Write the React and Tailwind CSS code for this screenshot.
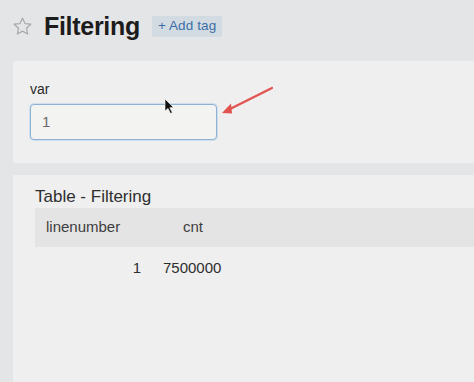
import React from "react";

const StarIcon = () => (
  <svg width="21" height="21" viewBox="0 0 24 24" fill="none" stroke="#a9a9ab" strokeWidth="1.4" strokeLinejoin="round">
    <path d="M12 2.5l2.9 6.1 6.6.8-4.9 4.6 1.3 6.6L12 17.3l-5.9 3.3 1.3-6.6-4.9-4.6 6.6-.8z" />
  </svg>
);

// red annotation arrow drawn over the screenshot
const Annotation = () => (
  <svg className="absolute left-0 top-0 pointer-events-none" width="474" height="382">
    <line x1="272" y1="88" x2="228" y2="110" stroke="#e2524f" strokeWidth="2.2" strokeLinecap="round" />
    <path d="M222 113 L231 103.5 L232 113.5 Z" fill="#e2524f" />
    <path d="M165 99 L165 111 L168 108.5 L170.5 113.5 L172.3 112.6 L169.8 107.8 L173.5 107.5 Z" fill="#111" stroke="#fff" strokeWidth="0.6" />
  </svg>
);

export default function App() {
  return (
    <div
      className="relative w-[474px] h-[382px] overflow-hidden bg-[#e4e5e6]"
      style={{ fontFamily: '"Liberation Sans", Arial, sans-serif' }}
    >
      {/* header */}
      <div className="flex items-center h-[61px] pl-[12px] pb-[8px]">
        <StarIcon />
        <h1 className="ml-[11px] text-[25px] font-bold text-[#1c1c1c] tracking-[-0.3px]">Filtering</h1>
        <span className="ml-[12px] h-[21px] px-[6px] flex items-center rounded-[2px] bg-[#d3dbe2] text-[13.5px] text-[#3b6ea6] tracking-[0.1px]">
          + Add tag
        </span>
      </div>

      {/* variable card */}
      <div className="ml-[13px] h-[102px] bg-[#efefef] pl-[17px] pt-[19px] rounded-tl-[2px]">
        <div className="text-[14px] text-[#2a2a2a] leading-[18px]">var</div>
        <div className="mt-[6px] w-[187px] h-[36px] rounded-[4px] border-[1.5px] border-[#8db2d4] bg-[#f3f3f2] shadow-[0_0_0_1px_#cfdeec] flex items-center pl-[11px] text-[15px] text-[#6a6a6a]">
          1
        </div>
      </div>

      {/* table card */}
      <div className="ml-[13px] mt-[12px] w-[461px] h-[220px] bg-[#efefef] pl-[22px] pt-[11px]">
        <div className="text-[17px] text-[#2e2e2e] leading-[21px]">Table - Filtering</div>
        <div className="mt-[1px] h-[39px] bg-[#e4e4e4] flex items-center text-[15px] text-[#3e3e3e]">
          <div className="w-[118px] pl-[11px]">linenumber</div>
          <div className="pl-[30px]">cnt</div>
        </div>
        <div className="h-[42px] flex items-center text-[15px] text-[#2e2e2e]">
          <div className="w-[118px] pr-[12px] text-right">1</div>
          <div className="pl-[10px]">7500000</div>
        </div>
      </div>

      <Annotation />
    </div>
  );
}
